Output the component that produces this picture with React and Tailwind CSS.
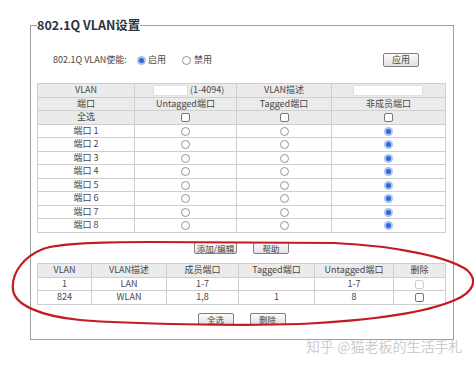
import React from "react";

const font = { fontFamily: '"Noto Sans CJK SC", "Liberation Sans", sans-serif' };

function Radio({ checked }) {
  if (checked) {
    return (
      <span className="inline-flex w-[9px] h-[9px] rounded-full bg-[#a9c2f0] items-center justify-center align-middle">
        <span className="w-[5px] h-[5px] rounded-full bg-[#2f68d6]" />
      </span>
    );
  }
  return <span className="inline-block w-[9px] h-[9px] rounded-full border border-[#949494] bg-white align-middle" />;
}

function Check({ disabled }) {
  return (
    <span
      className={
        "inline-block w-[9px] h-[9px] rounded-[2px] border bg-white align-middle " +
        (disabled ? "border-[#d0d0d0]" : "border-[#777]")
      }
    />
  );
}

function Btn({ children, w }) {
  return (
    <button
      className={
        "h-[12px] rounded-[2px] border border-[#808080] bg-gradient-to-b from-[#fbfbfb] to-[#e2e2e2] text-[8.5px] leading-[10px] whitespace-nowrap px-0 text-[#444] " +
        w
      }
      style={font}
    >
      {children}
    </button>
  );
}

const cell = "border border-[#cfcfcf] text-center p-0 leading-[10px] whitespace-nowrap";

export default function App() {
  const ports = [1, 2, 3, 4, 5, 6, 7, 8];
  return (
    <div className="relative w-[474px] h-[366px] bg-white overflow-hidden text-[#474747]" style={font}>
      <div className="pl-[30px] pt-[17px]">
        <fieldset className="w-[423px] h-[323px] border border-[#a0a0a0] pl-[6px] pr-[7px]">
          <legend className="text-[12.5px] leading-[16px] font-semibold text-[#2a3342] px-0">802.1Q VLAN设置</legend>
          <div className="mt-[20px] h-[14px] flex items-center text-[9px] leading-[10px]">
            <span className="ml-[16px] w-[84px]">802.1Q VLAN使能:</span>
            <Radio checked />
            <span className="ml-[2px]">启用</span>
            <span className="ml-[16px] flex"><Radio /></span>
            <span className="ml-[3px]">禁用</span>
            <span className="ml-[171px] flex">
              <button className="w-[36px] h-[14px] rounded-[2px] border border-[#808080] bg-gradient-to-b from-[#fbfbfb] to-[#e2e2e2] text-[9px] leading-[12px]" style={font}>应用</button>
            </span>
          </div>
          <table className="mt-[16px] w-[408px] table-fixed border-collapse text-[9px]">
            <colgroup>
              <col className="w-[97px]" />
              <col className="w-[102px]" />
              <col className="w-[95px]" />
              <col className="w-[114px]" />
            </colgroup>
            <tbody>
              <tr className="h-[13.5px] bg-[#ebebeb]">
                <td className={cell}>VLAN</td>
                <td className={cell}>
                  <div className="flex items-center justify-start pl-[18px]">
                    <span className="inline-block w-[35px] h-[11px] bg-white border border-[#e0e0e0]" />
                    <span className="ml-[2px]">(1-4094)</span>
                  </div>
                </td>
                <td className={cell}>VLAN描述</td>
                <td className={cell}>
                  <div className="flex items-center pl-[21px]">
                    <span className="inline-block w-[70px] h-[11px] bg-white border border-[#e0e0e0]" />
                  </div>
                </td>
              </tr>
              <tr className="h-[13.5px] bg-[#ebebeb]">
                <td className={cell}>端口</td>
                <td className={cell}>Untagged端口</td>
                <td className={cell}>Tagged端口</td>
                <td className={cell}>非成员端口</td>
              </tr>
              <tr className="h-[13.5px] bg-[#ebebeb]">
                <td className={cell}>全选</td>
                <td className={cell}><Check /></td>
                <td className={cell}><Check /></td>
                <td className={cell}><Check /></td>
              </tr>
              {ports.map((p) => (
                <tr key={p} className="h-[13.5px] bg-white">
                  <td className={cell}>端口 {p}</td>
                  <td className={cell}><Radio /></td>
                  <td className={cell}><Radio /></td>
                  <td className={cell}><Radio checked /></td>
                </tr>
              ))}
            </tbody>
          </table>
          <div className="mt-[9px] flex justify-center gap-[16px]">
            <Btn w="w-[43px]">添加/编辑</Btn>
            <Btn w="w-[36px]">帮助</Btn>
          </div>
          <table className="mt-[9px] w-[408px] table-fixed border-collapse text-[9px]">
            <colgroup>
              <col className="w-[54px]" />
              <col className="w-[75px]" />
              <col className="w-[72px]" />
              <col className="w-[76px]" />
              <col className="w-[79px]" />
              <col className="w-[52px]" />
            </colgroup>
            <tbody>
              <tr className="h-[14px] bg-[#ebebeb]">
                <td className={cell}>VLAN</td>
                <td className={cell}>VLAN描述</td>
                <td className={cell}>成员端口</td>
                <td className={cell}>Tagged端口</td>
                <td className={cell}>Untagged端口</td>
                <td className={cell}>删除</td>
              </tr>
              <tr className="h-[13.5px] bg-white">
                <td className={cell}>1</td>
                <td className={cell}>LAN</td>
                <td className={cell}>1-7</td>
                <td className={cell}></td>
                <td className={cell}>1-7</td>
                <td className={cell}><Check disabled /></td>
              </tr>
              <tr className="h-[13.5px] bg-white">
                <td className={cell}>824</td>
                <td className={cell}>WLAN</td>
                <td className={cell}>1,8</td>
                <td className={cell}>1</td>
                <td className={cell}>8</td>
                <td className={cell}><Check /></td>
              </tr>
            </tbody>
          </table>
          <div className="mt-[8px] flex justify-center gap-[16px]">
            <Btn w="w-[36px]">全选</Btn>
            <Btn w="w-[36px]">删除</Btn>
          </div>
        </fieldset>
      </div>
      <svg className="absolute inset-0 pointer-events-none" width="474" height="366" viewBox="0 0 474 366">
        <path
          d="M 43 249 C 60 243, 100 242, 150 242 L 334 243 C 400 246, 450 258, 467 270 C 478 280, 474 292, 455 300 C 430 311, 380 320, 300 324 C 240 326, 130 324, 80 320 C 40 316, 15 305, 13 290 C 11 272, 25 256, 43 249"
          fill="none"
          stroke="#c21b22"
          strokeWidth="2.2"
          strokeLinecap="round"
        />
      </svg>
      <div className="absolute left-[306px] top-[337px] text-[14px] leading-[18px] text-[#cdcdcd] whitespace-nowrap" style={font}>
        知乎 @猫老板的生活手札
      </div>
    </div>
  );
}
